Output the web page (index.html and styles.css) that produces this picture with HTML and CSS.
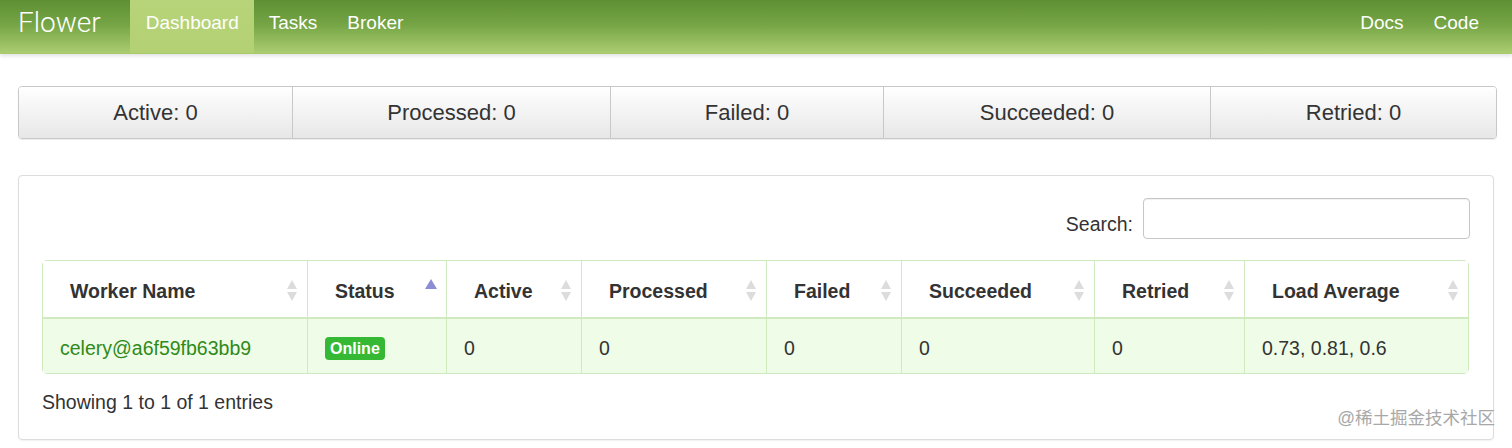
FILE: index.html
```html
<!DOCTYPE html>
<html lang="en">
<head>
<meta charset="utf-8">
<title>Flower</title>
<link rel="stylesheet" href="styles.css">
</head>
<body>
<nav class="navbar">
  <div class="nav-left">
    <a class="brand" href="#">Flower</a>
    <a class="nav-item active" href="#">Dashboard</a>
    <a class="nav-item" href="#">Tasks</a>
    <a class="nav-item" href="#">Broker</a>
  </div>
  <div class="nav-right">
    <a class="nav-item" href="#">Docs</a>
    <a class="nav-item" href="#">Code</a>
  </div>
</nav>

<main class="container">
  <div class="stats">
    <div class="stat s1">Active: 0</div>
    <div class="stat s2">Processed: 0</div>
    <div class="stat s3">Failed: 0</div>
    <div class="stat s4">Succeeded: 0</div>
    <div class="stat s5">Retried: 0</div>
  </div>

  <section class="card">
    <div class="search-row">
      <label class="search-label">Search:</label>
      <input class="search-input" type="text">
    </div>
    <table class="workers">
      <thead>
        <tr>
          <th class="c1"><span>Worker Name</span><i class="sort"></i></th>
          <th class="c2"><span>Status</span><i class="sort asc"></i></th>
          <th class="c3"><span>Active</span><i class="sort"></i></th>
          <th class="c4"><span>Processed</span><i class="sort"></i></th>
          <th class="c5"><span>Failed</span><i class="sort"></i></th>
          <th class="c6"><span>Succeeded</span><i class="sort"></i></th>
          <th class="c7"><span>Retried</span><i class="sort"></i></th>
          <th class="c8"><span>Load Average</span><i class="sort"></i></th>
        </tr>
      </thead>
      <tbody>
        <tr>
          <td><a class="worker" href="#">celery@a6f59fb63bb9</a></td>
          <td><span class="badge">Online</span></td>
          <td>0</td>
          <td>0</td>
          <td>0</td>
          <td>0</td>
          <td>0</td>
          <td>0.73, 0.81, 0.6</td>
        </tr>
      </tbody>
    </table>
    <div class="info">Showing 1 to 1 of 1 entries</div>
    <div class="watermark">@稀土掘金技术社区</div>
  </section>
</main>
</body>
</html>
```

FILE: styles.css
```css
* { box-sizing: border-box; }
html, body { margin: 0; padding: 0; background: #fff; }
body {
  font-family: "Liberation Sans", Arial, "Noto Sans CJK SC", sans-serif;
  font-size: 19.5px;
  color: #333;
  width: 1512px;
  height: 448px;
  overflow: hidden;
}
a { text-decoration: none; }

.navbar {
  height: 54px;
  display: flex;
  justify-content: space-between;
  background: linear-gradient(to bottom, #5e8f33 0%, #74a444 45%, #abcc70 100%);
  box-shadow: 0 2px 4px rgba(0,0,0,0.12);
  border-bottom: 1px solid #a9c96d;
}
.nav-left, .nav-right { display: flex; align-items: stretch; }
.nav-right { padding-right: 18px; }
.brand {
  font-family: "Roboto", "Liberation Sans", sans-serif;
  font-weight: 300;
  font-size: 28px;
  color: #fff;
  padding: 0 29px 0 18px;
  line-height: 46px;
}
.nav-item {
  color: #fff;
  font-size: 19px;
  line-height: 46px;
  padding: 0 15px;
}
.nav-item.active {
  background: linear-gradient(to bottom, #b7d47a, #b3d073);
  padding: 0 15px 0 16px;
}
.nav-right .nav-item { padding: 0 15px; }

.container { padding: 32px 18px 0 18px; }

.stats {
  display: flex;
  height: 53px;
  width: 1479px;
  border: 1px solid #c8c8c8;
  border-radius: 4px;
  overflow: hidden;
  box-shadow: 0 1px 1px rgba(0,0,0,0.08);
}
.stat {
  display: flex;
  align-items: center;
  justify-content: center;
  font-size: 22px;
  color: #333;
  background: linear-gradient(to bottom, #ffffff, #e7e7e7);
  border-left: 1px solid #c8c8c8;
  padding-top: 1px;
}
.stat.s1 { border-left: 0; width: 273px; }
.stat.s2 { width: 318px; }
.stat.s3 { width: 273px; }
.stat.s4 { width: 327px; }
.stat.s5 { flex: 1; }

.card {
  position: relative;
  margin-top: 36px;
  width: 1476px;
  height: 265px;
  border: 1px solid #dcdcdc;
  border-radius: 4px;
  box-shadow: 0 1px 2px rgba(0,0,0,0.06);
  padding: 22px 23px 0 23px;
}
.search-row {
  display: flex;
  justify-content: flex-end;
  align-items: center;
  gap: 10px;
}
.search-label { font-size: 19.5px; color: #333; margin-top: 12px; }
.search-input {
  width: 327px;
  height: 41px;
  border: 1px solid #c6c6c6;
  border-radius: 4px;
  box-shadow: inset 0 1px 1px rgba(0,0,0,0.06);
  margin: 0;
}

.workers {
  margin-top: 21px;
  width: 1425px;
  border-collapse: separate;
  border-spacing: 0;
  border: 1px solid #cfeabf;
  border-radius: 5px;
  table-layout: fixed;
}
.workers th {
  position: relative;
  height: 58px;
  text-align: left;
  font-weight: bold;
  font-size: 19.5px;
  color: #333;
  padding: 4px 20px 0 27px;
  border-left: 1px solid #cfeabf;
  border-bottom: 2px solid #cfeabf;
  background: #fff;
}
.workers th:first-child, .workers td:first-child { border-left: 0; }
.workers th.c1 { width: 264px; }
.workers th.c2 { width: 139px; }
.workers th.c3 { width: 135px; }
.workers th.c4 { width: 185px; }
.workers th.c5 { width: 135px; }
.workers th.c6 { width: 193px; }
.workers th.c7 { width: 150px; }
.workers th.c8 { width: 224px; }

.sort {
  position: absolute;
  right: 9px;
  top: 19px;
  width: 12px;
  height: 22px;
}
.sort::before, .sort::after {
  content: "";
  position: absolute;
  left: 1px;
  border-left: 5px solid transparent;
  border-right: 5px solid transparent;
}
.sort::before { top: 0; border-bottom: 9px solid #dcdcdc; }
.sort::after { top: 12px; border-top: 9px solid #dcdcdc; }
.sort.asc { top: 18px; }
.sort.asc::before { border-left-width: 6px; border-right-width: 6px; border-bottom: 10px solid #8d8dd6; left: 0; }
.sort.asc::after { display: none; }

.workers td {
  height: 54px;
  padding: 4px 17px 0 17px;
  background: #effce8;
  border-left: 1px solid #cfeabf;
  font-size: 19.5px;
  color: #333;
}
.worker { color: #2f8a18; }
.badge {
  display: inline-block;
  background: #35b934;
  color: #fff;
  font-weight: bold;
  font-size: 16px;
  line-height: 23px;
  padding: 0 5px;
  border-radius: 4px;
}

.info {
  margin-top: 17px;
  font-size: 19.5px;
  color: #333;
}
.watermark {
  position: absolute;
  right: -2px;
  bottom: 10px;
  font-family: "Liberation Sans", "Noto Sans CJK SC", sans-serif;
  font-size: 17.5px;
  color: #a8a8a8;
  line-height: 22px;
}
```
